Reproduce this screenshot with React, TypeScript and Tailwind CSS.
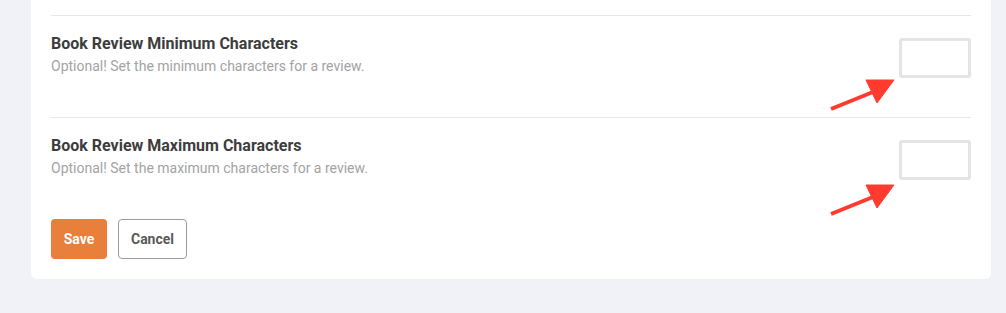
import { useState } from 'react'

function SettingRow({ title, description }: { title: string; description: string }) {
  const [value, setValue] = useState('')
  return (
    <div className="flex items-start justify-between border-t border-[#e6e6e6] pt-4 pb-[39px]">
      <div>
        <div className="text-[16px] leading-6 font-bold text-[#3d3d3d]">{title}</div>
        <div className="text-[14px] leading-5 text-[#a3a3a3]">{description}</div>
      </div>
      <input
        value={value}
        onChange={(e) => setValue(e.target.value)}
        className="mt-[6px] h-10 w-[72px] rounded-[3px] border-[3px] border-[#e4e4e4] bg-white px-2 text-sm outline-none"
      />
    </div>
  )
}

export default function App() {
  return (
    <div className="relative min-h-[313px] bg-[#f1f2f7] pb-[34px] font-['Roboto',sans-serif]">
      <div className="ml-[31px] w-[960px] rounded-b-md bg-white px-5 pt-[15px] pb-5">
        <SettingRow
          title="Book Review Minimum Characters"
          description="Optional! Set the minimum characters for a review."
        />
        <SettingRow
          title="Book Review Maximum Characters"
          description="Optional! Set the maximum characters for a review."
        />
        <div className="flex gap-[11px]">
          <button className="h-10 w-14 rounded bg-[#e8803c] text-[14px] font-bold text-white">Save</button>
          <button className="h-10 w-[69px] rounded border border-[#9c9c9c] bg-white text-[14px] font-bold text-[#5a5a5a]">
            Cancel
          </button>
        </div>
      </div>

      {/* annotation arrows */}
      <svg className="pointer-events-none absolute left-0 top-0" width="1006" height="313" viewBox="0 0 1006 313">
        <g fill="#ff3b30" stroke="#ff3b30">
          <line x1="831" y1="109" x2="873" y2="92" strokeWidth="4" />
          <polygon points="866,80 894,80 877,103" strokeWidth="1" strokeLinejoin="round" />
          <line x1="831" y1="214" x2="873" y2="197" strokeWidth="4" />
          <polygon points="866,185 894,185 877,208" strokeWidth="1" strokeLinejoin="round" />
        </g>
      </svg>
    </div>
  )
}
